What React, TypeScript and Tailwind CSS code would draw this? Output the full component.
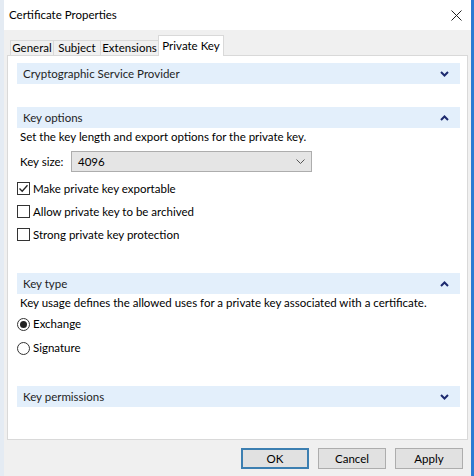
import { useState } from "react";

function Chevron({ up }: { up?: boolean }) {
  return (
    <svg width="9" height="6" viewBox="0 0 9 6" className="shrink-0">
      <path
        d={up ? "M1 5 L4.5 1.5 L8 5" : "M1 1 L4.5 4.5 L8 1"}
        fill="none"
        stroke="#1c2a6e"
        strokeWidth="2"
      />
    </svg>
  );
}

function SectionHeader({ title, up }: { title: string; up?: boolean }) {
  return (
    <div className="flex h-[21px] items-center justify-between bg-[#e3effb] pl-[6px] pr-[11px] text-[#1e1e1e]">
      <span>{title}</span>
      <Chevron up={up} />
    </div>
  );
}

function Checkbox({ checked, label }: { checked: boolean; label: string }) {
  return (
    <div className="flex h-[23px] items-center">
      <div className="flex h-[13px] w-[13px] items-center justify-center border border-[#333] bg-white">
        {checked && (
          <svg width="11" height="11" viewBox="0 0 11 11">
            <path d="M1.5 5.5 L4.2 8.3 L9.5 2.2" fill="none" stroke="#222" strokeWidth="1.3" />
          </svg>
        )}
      </div>
      <span className="ml-[3px]">{label}</span>
    </div>
  );
}

function Radio({ checked, label }: { checked: boolean; label: string }) {
  return (
    <div className="flex h-[24px] items-center">
      <div className="flex h-[13px] w-[13px] items-center justify-center rounded-full border border-[#333] bg-white">
        {checked && <div className="h-[7px] w-[7px] rounded-full bg-[#222]" />}
      </div>
      <span className="ml-[3px]">{label}</span>
    </div>
  );
}

const tabs = [
  { name: "General", w: "w-[44px]" },
  { name: "Subject", w: "w-[48px]" },
  { name: "Extensions", w: "w-[59px]" },
  { name: "Private Key", w: "w-[66px]" },
];

export default function App() {
  const [activeTab] = useState("Private Key");

  return (
    <div
      className="flex h-[476px] w-[474px] bg-[#f0f0f0] text-[11.5px] text-black"
      style={{ fontFamily: '"Segoe UI", Lato, sans-serif' }}
    >
      {/* left window edge */}
      <div className="w-[4px] bg-[#e4ebf3]" />

      <div className="flex flex-1 flex-col">
        {/* title bar */}
        <div className="flex h-[30px] items-center justify-between bg-white pl-[5px] pr-[9px]">
          <span>Certificate Properties</span>
          <svg width="11" height="11" viewBox="0 0 11 11">
            <path d="M0.5 0.5 L10.5 10.5 M10.5 0.5 L0.5 10.5" stroke="#222" strokeWidth="1" />
          </svg>
        </div>

        <div className="flex flex-1 flex-col pl-[3px] pr-[3px]">
          {/* tabs */}
          <div className="mt-[5px] flex h-[20px] items-end pl-[3px]">
            {tabs.map((t) => {
              const active = t.name === activeTab;
              return (
                <div
                  key={t.name}
                  className={
                    active
                      ? `relative z-10 -mb-px -ml-px flex h-[21px] items-center justify-center border border-b-0 border-[#d9d9d9] bg-white ${t.w}`
                      : `-ml-px flex h-[15px] items-center justify-center border border-b-0 border-[#d9d9d9] bg-[#f0f0f0] first:ml-0 ${t.w}`
                  }
                >
                  {t.name}
                </div>
              );
            })}
          </div>

          {/* panel */}
          <div className="flex h-[385px] flex-col border border-[#d9d9d9] bg-white pl-[9px] pr-[7px] pt-[7px]">
            <SectionHeader title="Cryptographic Service Provider" />

            <div className="mt-[23px]">
              <SectionHeader title="Key options" up />
            </div>
            <div className="flex h-[18px] items-center whitespace-nowrap pl-[3px]">
              Set the key length and export options for the private key.
            </div>
            <div className="mt-[5px] flex items-center pl-[3px]">
              <span className="w-[51px]">Key size:</span>
              <div className="flex h-[21px] w-[241px] items-center justify-between border border-[#adadad] bg-[#e5e5e5] pl-[6px] pr-[6px]">
                <span>4096</span>
                <svg width="9" height="6" viewBox="0 0 9 6">
                  <path d="M0.5 0.5 L4.5 4.5 L8.5 0.5" fill="none" stroke="#555" strokeWidth="1" />
                </svg>
              </div>
            </div>
            <div className="mt-[5px]">
              <Checkbox checked label="Make private key exportable" />
              <Checkbox checked={false} label="Allow private key to be archived" />
              <Checkbox checked={false} label="Strong private key protection" />
            </div>

            <div className="mt-[27px]">
              <SectionHeader title="Key type" up />
            </div>
            <div className="flex h-[18px] items-center whitespace-nowrap pl-[3px]">
              Key usage defines the allowed uses for a private key associated with a certificate.
            </div>
            <Radio checked label="Exchange" />
            <Radio checked={false} label="Signature" />

            <div className="mt-[26px]">
              <SectionHeader title="Key permissions" />
            </div>
          </div>

          {/* buttons */}
          <div className="flex flex-1 items-start justify-end gap-[9px] pr-[5px] pt-[8px]">
            <button className="h-[21px] w-[68px] border-2 border-[#3c7fb1] bg-[#e1e1e1]">OK</button>
            <button className="h-[21px] w-[68px] border border-[#adadad] bg-[#e1e1e1]">Cancel</button>
            <button className="h-[21px] w-[68px] border border-[#adadad] bg-[#e1e1e1]">Apply</button>
          </div>
        </div>
      </div>

      {/* right window edge */}
      <div className="w-[3px] bg-[#2b7bd3]" />
    </div>
  );
}
